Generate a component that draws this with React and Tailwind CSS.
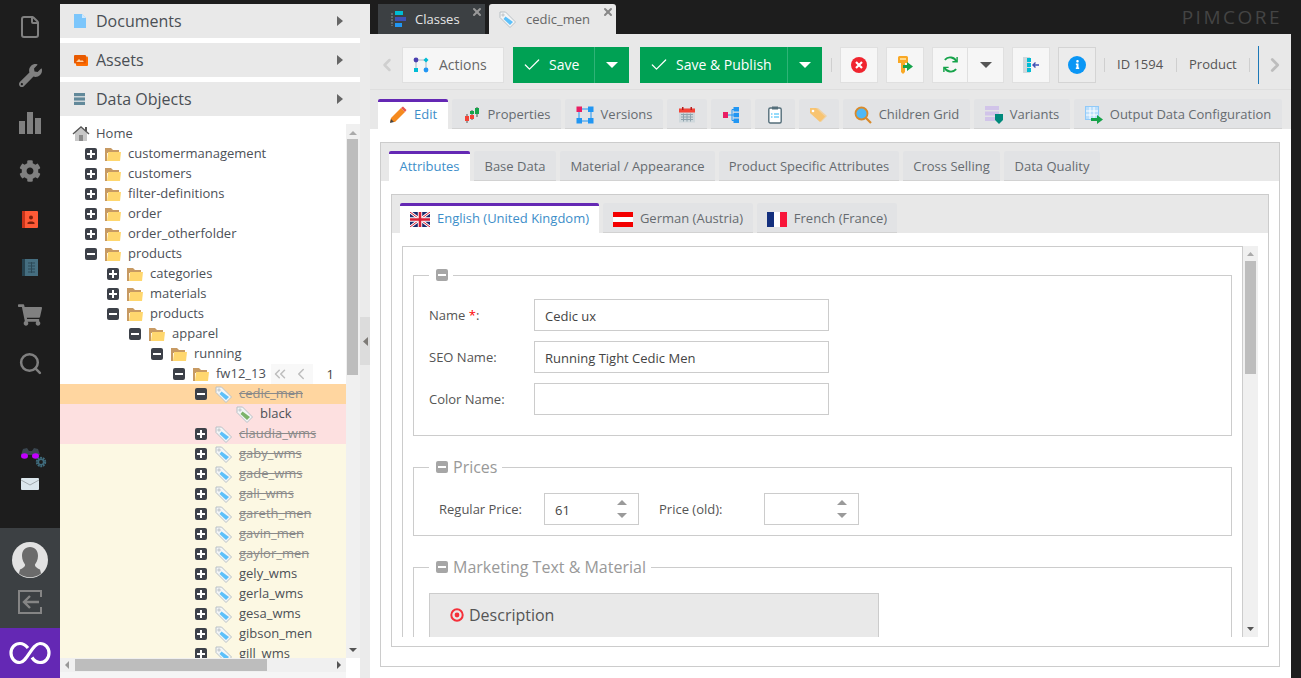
import { File, Search, X, Check, ChevronLeft, ChevronRight, ChevronsLeft } from 'lucide-react';
import { FaWrench, FaCog, FaShoppingCart, FaInfo } from 'react-icons/fa';

const Tri = ({ dir = 'down', className = '' }) => {
  const pts = { down: '0,0 10,0 5,5', up: '0,5 10,5 5,0', right: '0,0 6,5 0,10', left: '6,0 0,5 6,10' };
  const box = dir === 'left' || dir === 'right' ? '0 0 6 10' : '0 0 10 5';
  const size = dir === 'left' || dir === 'right' ? 'w-[6px] h-[10px]' : 'w-[10px] h-[5px]';
  return (
    <svg viewBox={box} preserveAspectRatio="none" className={`${className || size}`}>
      <polygon points={pts[dir]} fill="currentColor" />
    </svg>
  );
};

const ToggleBox = ({ open, gray }) => (
  <span className={`flex items-center justify-center w-[12px] h-[12px] rounded-[2px] shrink-0 ${gray ? 'bg-[#a6a6a6]' : 'bg-[#3d4149]'}`}>
    <svg viewBox="0 0 12 12" className="w-[12px] h-[12px]">
      <rect x="2" y="5" width="8" height="2" fill="#fff" />
      {!open && <rect x="5" y="2" width="2" height="8" fill="#fff" />}
    </svg>
  </span>
);

const Folder = () => (
  <svg viewBox="0 0 16 14" className="w-[16px] h-[14px] shrink-0">
    <path d="M0 1h6l2 2h6v3H2v8H0z" fill="#c79a63" />
    <path d="M3 5h13l-1 9H2z" fill="#ffd76e" />
  </svg>
);

const TagIcon = ({ color = '#5cc0fa' }) => (
  <svg viewBox="0 0 17 17" className="w-[17px] h-[17px] shrink-0">
    <path d="M1 1h5.500L16.500 11l-5.500 5.500L1 6.500z" fill="#f3f5f6" stroke="#b8c0c5" />
    <path d="M6.500 5.500l7.500 5.500-3 3-6.500-6z" fill={color} />
    <circle cx="4" cy="4" r="1.100" fill="#fff" stroke="#9fa8ad" strokeWidth="0.7" />
  </svg>
);

const HomeIcon = () => (
  <svg viewBox="0 0 18 18" className="w-[18px] h-[18px] shrink-0">
    <path d="M3 8l6-5 6 5v8H3z" fill="#c8c8c8" />
    <rect x="7" y="10" width="4" height="6" fill="#8a8a8a" />
    <path d="M1 9l8-7 8 7" fill="none" stroke="#555" strokeWidth="1.400" />
    <rect x="13" y="2" width="2" height="4" fill="#555" />
  </svg>
);

const ActionsIcon = () => (
  <svg viewBox="0 0 16 16" className="w-[16px] h-[16px]">
    <path d="M3 3h10M3 3v10M13 3v10" stroke="#9ab" strokeWidth="0.800" />
    <circle cx="3" cy="3" r="2.400" fill="#4a3fb0" />
    <path d="M13 0.500L15.500 3 13 5.500 10.500 3z" fill="#00bcd4" />
    <rect x="1" y="11" width="4" height="4" fill="#00bcd4" />
    <circle cx="13" cy="13" r="2.400" fill="#2196f3" />
  </svg>
);

const Candles = () => (
  <svg viewBox="0 0 18 18" className="w-[18px] h-[18px]">
    <path d="M4 8v9M9 4v10M14 1v10" stroke="#555" strokeWidth="1" />
    <rect x="2" y="10" width="4" height="5" fill="#f44336" />
    <rect x="7" y="5" width="4" height="3" fill="#16a34a" />
    <rect x="7" y="9" width="4" height="4" fill="#f44336" />
    <rect x="12" y="2" width="4" height="6" fill="#16a34a" />
  </svg>
);

const VersionsIcon = () => (
  <svg viewBox="0 0 18 18" className="w-[18px] h-[18px]">
    <path d="M3 3h12M3 3v12M15 3v12M3 15h12" stroke="#2196f3" strokeWidth="1" />
    <rect x="0.500" y="0.500" width="5.500" height="5.500" fill="#e91e63" />
    <rect x="12" y="0.500" width="5.500" height="5.500" fill="#2196f3" />
    <rect x="0.500" y="12" width="5.500" height="5.500" fill="#2196f3" />
    <rect x="12" y="12" width="5.500" height="5.500" fill="#2196f3" />
  </svg>
);

const CalendarIcon = () => (
  <svg viewBox="0 0 16 16" className="w-[16px] h-[16px]">
    <rect x="0" y="1.500" width="16" height="14" fill="#cfd8dc" />
    <rect x="0" y="1.500" width="16" height="4" fill="#f44336" />
    <rect x="3" y="0" width="1.500" height="3" fill="#b71c1c" />
    <rect x="11.500" y="0" width="1.500" height="3" fill="#b71c1c" />
    <path d="M2 7.500h12M2 10h12M2 12.500h12M4.500 6.500v8M8 6.500v8M11.500 6.500v8" stroke="#90a4ae" strokeWidth="1" />
  </svg>
);

const HierarchyIcon = () => (
  <svg viewBox="0 0 16 16" className="w-[16px] h-[16px]">
    <rect x="0" y="5" width="5" height="6" fill="#e91e63" />
    <path d="M5 8h4M9 2.500v11M9 2.500h2M9 8h2M9 13.500h2" stroke="#2196f3" strokeWidth="1" />
    <rect x="10.500" y="0" width="5.500" height="4.500" fill="#2196f3" />
    <rect x="10.500" y="5.800" width="5.500" height="4.500" fill="#2196f3" />
    <rect x="10.500" y="11.500" width="5.500" height="4.500" fill="#2196f3" />
  </svg>
);

const ClipboardIcon = () => (
  <svg viewBox="0 0 14 18" className="w-[14px] h-[18px]">
    <rect x="0.800" y="2" width="12.400" height="15" rx="1.500" fill="#fff" stroke="#546e7a" strokeWidth="1.400" />
    <rect x="4" y="0.500" width="6" height="3" fill="#546e7a" />
    <path d="M3 8h1.500M6 8h5M3 11h1.500M6 11h5" stroke="#29b6f6" strokeWidth="1" />
  </svg>
);

const TagsIcon = () => (
  <svg viewBox="0 0 19 16" className="w-[19px] h-[16px]">
    <path d="M3 1h5l9 8-6 6-8-8z" fill="#f5c988" opacity="0.700" />
    <path d="M0 1h6l9 8.500-5 5.500L0 6z" fill="#f8c471" />
    <circle cx="3" cy="4" r="1.300" fill="#fff" />
  </svg>
);

const MagnifierIcon = () => (
  <svg viewBox="0 0 18 18" className="w-[18px] h-[18px]">
    <circle cx="7.500" cy="7.500" r="6" fill="#4fb8f5" stroke="#d98a2b" strokeWidth="1.800" />
    <path d="M12 12l5 5" stroke="#d98a2b" strokeWidth="2.200" />
  </svg>
);

const VariantsIcon = () => (
  <svg viewBox="0 0 18 18" className="w-[18px] h-[18px]">
    <rect x="0" y="0" width="14" height="4" fill="#d1c4e9" />
    <rect x="0" y="5.500" width="14" height="4" fill="#d1c4e9" />
    <rect x="0" y="11" width="10" height="4" fill="#d1c4e9" />
    <path d="M10 8h8v6l-4 4-4-4z" fill="#00897b" />
  </svg>
);

const OutputIcon = () => (
  <svg viewBox="0 0 18 18" className="w-[18px] h-[18px]">
    <rect x="0.500" y="0.500" width="13" height="13" fill="#bbdefb" stroke="#90caf9" />
    <path d="M5 1v12M9 1v12M1 5h12M1 9h12" stroke="#fff" strokeWidth="1" />
    <path d="M6 12h6V9l6 4.500-6 4.500v-3H6z" fill="#16a34a" />
  </svg>
);

const Flag = ({ kind }) => {
  if (kind === 'uk') {
    return (
      <svg viewBox="0 0 20 15" className="w-[20px] h-[15px]">
        <rect width="20" height="15" fill="#1a2a6c" />
        <path d="M0 0l20 15M20 0L0 15" stroke="#fff" strokeWidth="2.800" />
        <path d="M0 0l20 15M20 0L0 15" stroke="#d81e34" strokeWidth="1" />
        <path d="M10 0v15M0 7.500h20" stroke="#fff" strokeWidth="4.400" />
        <path d="M10 0v15M0 7.500h20" stroke="#d81e34" strokeWidth="2.600" />
      </svg>
    );
  }
  if (kind === 'at') {
    return (
      <svg viewBox="0 0 20 15" className="w-[20px] h-[15px]">
        <rect width="20" height="15" fill="#f30000" />
        <rect y="5" width="20" height="5" fill="#fff" />
      </svg>
    );
  }
  return (
    <svg viewBox="0 0 20 15" className="w-[20px] h-[15px]">
      <rect width="7" height="15" fill="#14307e" />
      <rect x="7" width="6" height="15" fill="#fff" />
      <rect x="13" width="7" height="15" fill="#f8153a" />
    </svg>
  );
};

const treeRows = [
  { t: 'customermanagement', l: 1, k: 'f' },
  { t: 'customers', l: 1, k: 'f' },
  { t: 'filter-definitions', l: 1, k: 'f' },
  { t: 'order', l: 1, k: 'f' },
  { t: 'order_otherfolder', l: 1, k: 'f' },
  { t: 'products', l: 1, k: 'f', open: true },
  { t: 'categories', l: 2, k: 'f' },
  { t: 'materials', l: 2, k: 'f' },
  { t: 'products', l: 2, k: 'f', open: true },
  { t: 'apparel', l: 3, k: 'f', open: true },
  { t: 'running', l: 4, k: 'f', open: true },
  { t: 'fw12_13', l: 5, k: 'f', open: true, pager: true },
  { t: 'cedic_men', l: 6, k: 't', open: true, del: true, bg: 'bg-[#ffd6a0]' },
  { t: 'black', l: 7, k: 'v', bg: 'bg-[#fde0e0]' },
  { t: 'claudia_wms', l: 6, k: 't', del: true, bg: 'bg-[#fde0e0]' },
  { t: 'gaby_wms', l: 6, k: 't', del: true, bg: 'bg-[#fcf8e3]' },
  { t: 'gade_wms', l: 6, k: 't', del: true, bg: 'bg-[#fcf8e3]' },
  { t: 'gali_wms', l: 6, k: 't', del: true, bg: 'bg-[#fcf8e3]' },
  { t: 'gareth_men', l: 6, k: 't', del: true, bg: 'bg-[#fcf8e3]' },
  { t: 'gavin_men', l: 6, k: 't', del: true, bg: 'bg-[#fcf8e3]' },
  { t: 'gaylor_men', l: 6, k: 't', del: true, bg: 'bg-[#fcf8e3]' },
  { t: 'gely_wms', l: 6, k: 't', bg: 'bg-[#fcf8e3]' },
  { t: 'gerla_wms', l: 6, k: 't', bg: 'bg-[#fcf8e3]' },
  { t: 'gesa_wms', l: 6, k: 't', bg: 'bg-[#fcf8e3]' },
  { t: 'gibson_men', l: 6, k: 't', bg: 'bg-[#fcf8e3]' },
  { t: 'gill_wms', l: 6, k: 't', bg: 'bg-[#fcf8e3]' },
];

const indent = {
  1: 'pl-[25px]',
  2: 'pl-[47px]',
  3: 'pl-[69px]',
  4: 'pl-[91px]',
  5: 'pl-[113px]',
  6: 'pl-[135px]',
  7: 'pl-[176px]',
};

const TreeRow = ({ row }) => (
  <div className={`flex items-center h-[20px] shrink-0 text-[13px] ${indent[row.l]} ${row.bg || 'bg-white'}`}>
    {row.k !== 'v' && <ToggleBox open={row.open} />}
    {row.k === 'f' && <span className="ml-[8px]"><Folder /></span>}
    {row.k === 't' && <span className="ml-[8px]"><TagIcon /></span>}
    {row.k === 'v' && <TagIcon color="#7cb36a" />}
    <span className={`ml-[7px] whitespace-nowrap ${row.del ? 'line-through text-[#8a8a8a]' : 'text-[#4c5057]'}`}>{row.t}</span>
    {row.pager && (
      <div className="ml-auto flex items-center h-[20px] bg-[#f8f8f8]">
        <ChevronsLeft size={18} strokeWidth={2} className="text-[#bdbdbd]" />
        <ChevronLeft size={18} strokeWidth={2} className="text-[#bdbdbd] ml-[3px] mr-[3px]" />
        <span className="w-[33px] h-[20px] pr-[12px] text-right leading-[20px] text-[#444] bg-white">1</span>
      </div>
    )}
  </div>
);

const AccHeader = ({ icon, label }) => (
  <div className="flex items-center h-[34px] bg-[#e9e9e9] pl-[14px] pr-[17px] text-[16px] text-[#4a4f55]">
    <span className="w-[22px] flex justify-start">{icon}</span>
    <span className="flex-1">{label}</span>
    <Tri dir="right" className="w-[6px] h-[10px] text-[#666]" />
  </div>
);

const RailIcon = ({ children }) => (
  <div className="h-[48px] flex items-center justify-center shrink-0 text-[#808080]">{children}</div>
);

const ToolBtn = ({ children, w = 'w-[38px]', className = 'border border-[#e0e0e0] bg-[#f6f6f6]' }) => (
  <div className={`flex items-center justify-center h-[36px] ${w} ${className}`}>{children}</div>
);

const GreenBtn = ({ label, w, mr }) => (
  <div className={`flex items-center h-[36px] bg-[#00a154] text-white text-[14px] ${w} ${mr}`}>
    <div className="flex-1 flex items-center pl-[9px] gap-[7px]">
      <Check size={20} strokeWidth={1.500} />
      <span>{label}</span>
    </div>
    <div className="w-[35px] h-full flex items-center justify-center border-l border-[#2fb377]">
      <Tri dir="down" className="w-[12px] h-[6px] text-white" />
    </div>
  </div>
);

const TabBtn = ({ active, w, children }) => (
  <div className={`flex items-center justify-center h-[30px] gap-[7px] text-[13px] whitespace-nowrap rounded-t-[2px] ${w} ${active ? 'bg-white border-t-[3px] pb-[1px] border-[#6428b4] text-[#3d8ec9]' : 'bg-[#e2e3e5] border-b pt-[3px] border-[#d2d2d2] text-[#666b70]'}`}>
    {children}
  </div>
);

const Sep = ({ className = '' }) => <div className={`w-px h-[14px] shrink-0 bg-[#cfcfcf] ${className}`} />;

const Legend = ({ children }) => (
  <legend className="px-[7px] pr-[5px] h-[20px] flex items-center gap-[5px] text-[16px] text-[#999]">
    <ToggleBox open gray />
    {children}
  </legend>
);

const TextField = ({ label, req, value }) => (
  <div className="flex items-center h-[32px] text-[13px] text-[#555]">
    <span className="w-[105px] pt-[2px]">
      {label}
      {req && <span> <span className="text-[#f00]">*</span>:</span>}
    </span>
    <div className="w-[295px] h-[32px] border border-[#ccc] pl-[10px] leading-[32px] text-[#444]">{value}</div>
  </div>
);

const NumberField = ({ value }) => (
  <div className="relative w-[95px] h-[32px] border border-[#ccc] pl-[10px] leading-[32px] text-[#444]">
    {value}
    <div className="absolute right-[11px] top-[6px] flex flex-col gap-[8px] text-[#9a9a9a]">
      <Tri dir="up" />
      <Tri dir="down" />
    </div>
  </div>
);

export default function App() {
  return (
    <div className="flex w-[1301px] h-[678px] overflow-hidden bg-[#1d1d1d] font-['Open_Sans',sans-serif]">
      {/* Left rail */}
      <aside className="flex flex-col w-[60px] shrink-0 pt-[3px]">
        <RailIcon><File size={24} strokeWidth={2} /></RailIcon>
        <RailIcon><FaWrench size={23} /></RailIcon>
        <RailIcon>
          <svg viewBox="0 0 22 22" className="w-[22px] h-[22px]">
            <rect x="0" y="9" width="6" height="13" fill="currentColor" />
            <rect x="8" y="0" width="6" height="22" fill="currentColor" />
            <rect x="16" y="6" width="6" height="16" fill="currentColor" />
          </svg>
        </RailIcon>
        <RailIcon><FaCog size={22} /></RailIcon>
        <RailIcon>
          <svg viewBox="0 0 16 17" className="w-[16px] h-[17px]">
            <rect width="16" height="17" rx="1" fill="#ff5a36" />
            <rect width="3" height="17" fill="#c9341a" />
            <circle cx="9" cy="6.500" r="2" fill="#7a1f0c" />
            <path d="M5.500 12c0-2 7-2 7 0v1h-7z" fill="#7a1f0c" />
          </svg>
        </RailIcon>
        <RailIcon>
          <svg viewBox="0 0 16 17" className="w-[16px] h-[17px]">
            <rect width="16" height="17" fill="#26424f" />
            <rect x="3" width="13" height="17" fill="#456e80" />
            <path d="M6 4h7M6 7h7M6 10h7M6 13h7M9.500 3v11" stroke="#2c4957" strokeWidth="1" />
          </svg>
        </RailIcon>
        <RailIcon><FaShoppingCart size={24} /></RailIcon>
        <RailIcon><Search size={25} strokeWidth={2.400} /></RailIcon>
        <div className="flex justify-center mt-[60px] pl-[7px] h-[22px] shrink-0">
          <svg viewBox="0 0 27 21" className="w-[27px] h-[21px]">
            <path d="M1 8l2-6 4-1 2 3h3l2-3 4 1 2 6z" fill="#3a4650" />
            <ellipse cx="4.500" cy="9" rx="3.500" ry="2.800" fill="#c000ff" />
            <ellipse cx="15.500" cy="9" rx="3.500" ry="2.800" fill="#c000ff" />
            <circle cx="21" cy="15" r="4" fill="none" stroke="#3f6b7c" strokeWidth="2.400" strokeDasharray="1.800 0.700" />
            <circle cx="21" cy="15" r="2.600" fill="none" stroke="#3f6b7c" strokeWidth="1.400" />
          </svg>
        </div>
        <div className="flex justify-center mt-[9px] shrink-0">
          <svg viewBox="0 0 18 12" className="w-[18px] h-[12px]">
            <rect width="18" height="12" rx="1" fill="#dbe6ec" />
            <path d="M0 2l9 5 9-5" fill="none" stroke="#1d1d1d" strokeWidth="1" opacity="0.300" />
          </svg>
        </div>
        <div className="mt-auto h-[100px] bg-[#3c4043] flex flex-col items-center pt-[14px]">
          <svg viewBox="0 0 36 36" className="w-[36px] h-[36px] shrink-0">
            <circle cx="18" cy="18" r="18" fill="#e2e2e2" />
            <path d="M18 5c-5 0-8 3.500-8 9 0 4 2 7 3 8.500 .5 2-1.500 3.500-5 5l-1 4a18 18 0 0 0 22 0l-1-4c-3.500-1.500-5.500-3-5-5 1-1.500 3-4.500 3-8.500 0-5.500-3-9-8-9z" fill="#6b6b6b" />
          </svg>
          <svg viewBox="0 0 24 24" fill="none" stroke="#858585" strokeWidth="2" className="w-[24px] h-[24px] mt-[12px]">
            <path d="M23 7V1H1v22h22v-6" />
            <path d="M21 12H7M12 6l-6 6 6 6" strokeWidth="2.400" />
          </svg>
        </div>
        <div className="h-[50px] shrink-0 bg-[#6428b4] flex items-center justify-center">
          <svg viewBox="0 0 42 24" fill="none" stroke="#fff" strokeWidth="3.200" className="w-[42px] h-[24px]">
            <path d="M19 7C16 3.500 13.500 2.500 11 2.500 6 2.500 2 6.500 2 12s4 9.500 9 9.500c7 0 12-19 20-19 5 0 9 4 9 9.500s-4 9.500-9 9.500c-3 0-6-2-8-5" />
          </svg>
        </div>
      </aside>

      {/* Tree panel */}
      <section className="flex flex-col w-[300px] shrink-0 mt-[4px] bg-white">
        <AccHeader
          label="Documents"
          icon={
            <svg viewBox="0 0 12 14" className="w-[12px] h-[14px]">
              <path d="M0 0h8l4 4v10H0z" fill="#7cc6fb" />
              <path d="M8 0l4 4H8z" fill="#cfe9fd" />
            </svg>
          }
        />
        <div className="mt-[5px]">
          <AccHeader
            label="Assets"
            icon={
              <svg viewBox="0 0 14 11" className="w-[14px] h-[11px]">
                <rect x="2" y="1.500" width="12" height="9.500" rx="1" fill="#ff6d00" />
                <rect width="12" height="8.500" rx="1" fill="#e85a00" />
                <path d="M2 7l3-3 2 2 1-1 2 2z" fill="#ffd0a0" />
              </svg>
            }
          />
        </div>
        <div className="mt-[5px]">
          <AccHeader
            label="Data Objects"
            icon={
              <svg viewBox="0 0 11 12" className="w-[11px] h-[12px]">
                <rect width="11" height="3.200" fill="#62899a" />
                <rect y="4.400" width="11" height="3.200" fill="#62899a" />
                <rect y="8.800" width="11" height="3.200" fill="#62899a" />
              </svg>
            }
          />
        </div>
        <div className="flex flex-1 min-h-0">
          <div className="flex flex-col w-[286px] shrink-0">
            <div className="flex-1 min-h-0 overflow-hidden pt-[8px] flex flex-col">
              <div className="flex items-center h-[20px] shrink-0 pl-[12px] text-[13px] text-[#4c5057]">
                <HomeIcon />
                <span className="ml-[6px]">Home</span>
              </div>
              {treeRows.map((row, i) => <TreeRow key={i} row={row} />)}
            </div>
            {/* horizontal scrollbar */}
            <div className="flex items-center h-[14px] shrink-0 bg-[#f0f0f0] px-[5px] text-[#999]">
              <Tri dir="left" className="w-[4px] h-[8px]" />
              <div className="ml-[6px] w-[192px] h-[12px] bg-[#bdbdbd]" />
              <Tri dir="right" className="ml-auto w-[4px] h-[8px] text-[#555]" />
            </div>
            <div className="h-[6px] shrink-0 bg-[#f5f5f5]" />
          </div>
          {/* vertical scrollbar */}
          <div className="flex flex-col items-start pl-[1px] w-[14px] mt-[8px] mb-[20px] bg-[#f0f0f0] text-[#aaa]">
            <Tri dir="up" className="ml-[2px] w-[8px] h-[4px] mt-[7px]" />
            <div className="mt-[4px] w-[11px] h-[236px] bg-[#bdbdbd]" />
            <Tri dir="down" className="ml-[2px] w-[8px] h-[4px] mt-auto mb-[6px] text-[#555]" />
          </div>
        </div>
      </section>

      {/* Splitter */}
      <div className="flex items-center w-[10px] shrink-0 bg-[#ebebeb] mt-[4px]">
        <div className="flex items-center justify-center w-[10px] h-[48px] bg-[#dcdcdc] text-[#7d7a76]">
          <Tri dir="left" className="w-[5px] h-[9px]" />
        </div>
      </div>

      {/* Main */}
      <main className="flex flex-col w-[921px] shrink-0">
        <div className="flex items-end h-[34px] shrink-0 pl-[8px] text-[13px]">
          <div className="relative flex items-center w-[107px] h-[30px] bg-[#3c4043] pl-[13px] pt-[1px] gap-[9px] text-[#e6e6e6]">
            <svg viewBox="0 0 15 17" className="w-[15px] h-[17px]">
              <path d="M1 2v13" stroke="#8a9297" strokeWidth="1" strokeDasharray="2 1" />
              <rect x="4" y="0" width="8" height="4" fill="#00bcd4" />
              <rect x="4" y="6" width="11" height="4" fill="#3f51b5" />
              <rect x="4" y="12" width="7" height="4" fill="#2196f3" />
            </svg>
            Classes
            <X size={12} strokeWidth={4} className="absolute top-[2px] right-[2px] text-[#999]" />
          </div>
          <div className="relative flex items-center w-[127px] h-[30px] ml-[4px] bg-[#e8e8e8] rounded-t-[3px] pl-[10px] pt-[1px] gap-[10px] text-[#666]">
            <TagIcon />
            cedic_men
            <X size={12} strokeWidth={4} className="absolute top-[2px] right-[2px] text-[#888]" />
          </div>
          <div className="ml-auto mb-[6px] pr-[9px] text-[19px] leading-[22px] tracking-[2.500px] font-medium text-[#444]">PIMCORE</div>
        </div>

        <div className="flex flex-col flex-1 min-h-0 bg-white">
          {/* Toolbar */}
          <div className="flex items-center h-[56px] shrink-0 bg-[#e8e8e8] border-b border-[#dedede] pl-[7px] pt-[6px]">
            <ChevronLeft size={20} strokeWidth={3} className="text-[#cfcfcf] shrink-0" />
            <div className="flex items-center w-[102px] h-[36px] ml-[5px] mr-[9px] bg-[#f6f6f6] border border-[#e0e0e0] pl-[10px] gap-[10px] text-[14px] text-[#666]">
              <ActionsIcon />
              Actions
            </div>
            <GreenBtn label="Save" w="w-[116px]" mr="mr-[11px]" />
            <GreenBtn label="Save & Publish" w="w-[182px]" />
            <Sep className="ml-[9px] mr-[8px]" />
            <ToolBtn>
              <svg viewBox="0 0 16 16" className="w-[16px] h-[16px]">
                <circle cx="8" cy="8" r="8" fill="#f0252f" />
                <path d="M5 5l6 6M11 5l-6 6" stroke="#fff" strokeWidth="2.200" />
              </svg>
            </ToolBtn>
            <div className="w-[8px] shrink-0" />
            <ToolBtn>
              <svg viewBox="0 0 16 18" className="w-[16px] h-[18px]">
                <path d="M1 1.500Q1 0 2.500 0h7Q11 0 11 1.500V7H8v9l-2 2-2-2V7H1z" fill="#f9a825" />
                <rect x="3" y="2" width="6" height="2" fill="#ffd98a" />
                <path d="M6 9h4V6l6 4.500-6 4.500v-3H6z" fill="#16a34a" />
              </svg>
            </ToolBtn>
            <div className="w-[8px] shrink-0" />
            <ToolBtn w="w-[36px]">
              <svg viewBox="0 0 18 18" fill="none" stroke="#16a34a" strokeWidth="2" className="w-[17px] h-[17px]">
                <path d="M15.500 6A7.500 7.500 0 0 0 3 4" />
                <path d="M2.500 12A7.500 7.500 0 0 0 15 14" />
                <path d="M16 1v5h-5M2 17v-5h5" strokeWidth="1.500" />
              </svg>
            </ToolBtn>
            <ToolBtn w="w-[36px]" className="border border-l-0 border-[#e0e0e0] bg-[#f6f6f6]">
              <Tri className="w-[12px] h-[6px] text-[#555]" />
            </ToolBtn>
            <div className="w-[8px] shrink-0" />
            <ToolBtn>
              <svg viewBox="0 0 18 16" className="w-[18px] h-[16px]">
                <rect x="1" y="0" width="7" height="16" fill="#cfd8dc" />
                <rect x="5" y="1" width="4" height="4" fill="#00bcd4" />
                <rect x="5" y="6" width="4" height="4" fill="#00bcd4" />
                <rect x="5" y="11" width="4" height="4" fill="#00bcd4" />
                <path d="M17 8h-6M13.500 5.500L11 8l2.500 2.500" fill="none" stroke="#3f51b5" strokeWidth="1.400" />
              </svg>
            </ToolBtn>
            <div className="w-[8px] shrink-0" />
            <ToolBtn className="border border-[#d4d4d4] bg-[#ececec]">
              <span className="flex items-center justify-center w-[18px] h-[18px] rounded-full bg-[#0a96f5] text-white">
                <FaInfo size={9} />
              </span>
            </ToolBtn>
            <Sep className="ml-[8px]" />
            <span className="ml-[12px] w-[46px] whitespace-nowrap text-[13px] text-[#555]">ID 1594</span>
            <Sep className="ml-[13px]" />
            <span className="ml-[12px] w-[48px] whitespace-nowrap text-[13px] text-[#555]">Product</span>
            <Sep className="ml-[12px]" />
            <div className="ml-[8px] w-px h-[38px] shrink-0 bg-[#1b78b8]" />
            <ChevronRight size={22} strokeWidth={3} className="ml-[5px] shrink-0 text-[#bdbdbd]" />
          </div>

          {/* Edit tabs */}
          <div className="flex gap-[4px] shrink-0 pl-[8px] pt-[9px] h-[39px] bg-[#e8e8e8]">
            <TabBtn active w="w-[70px]">
              <svg viewBox="0 0 18 18" className="w-[18px] h-[18px]">
                <path d="M2 12L12 2l4 4L6 16H1z" fill="#f58a1f" />
                <path d="M12 2l2-1.500L17.500 4 16 6z" fill="#e8574d" />
                <path d="M1 17l1-4 3 3z" fill="#444" />
              </svg>
              Edit
            </TabBtn>
            <TabBtn w="w-[109px]"><Candles />Properties</TabBtn>
            <TabBtn w="w-[98px]"><VersionsIcon />Versions</TabBtn>
            <TabBtn w="w-[40px]"><CalendarIcon /></TabBtn>
            <TabBtn w="w-[40px]"><HierarchyIcon /></TabBtn>
            <TabBtn w="w-[40px]"><ClipboardIcon /></TabBtn>
            <TabBtn w="w-[40px]"><TagsIcon /></TabBtn>
            <TabBtn w="w-[127px]"><MagnifierIcon />Children Grid</TabBtn>
            <TabBtn w="w-[96px]"><VariantsIcon />Variants</TabBtn>
            <TabBtn w="w-[208px]"><OutputIcon />Output Data Configuration</TabBtn>
          </div>

          {/* Editor */}
          <div className="flex-1 min-h-0 px-[10px] pt-[13px] pb-[11px]">
            <div className="flex flex-col h-full w-[900px] border border-[#ccc]">
              <div className="flex gap-[4px] h-[38px] shrink-0 pl-[8px] pt-[8px] bg-[#e8e8e8]">
                <TabBtn active w="w-[81px]">Attributes</TabBtn>
                <TabBtn w="w-[82px]">Base Data</TabBtn>
                <TabBtn w="w-[155px]">Material / Appearance</TabBtn>
                <TabBtn w="w-[180px]">Product Specific Attributes</TabBtn>
                <TabBtn w="w-[97px]">Cross Selling</TabBtn>
                <TabBtn w="w-[96px]">Data Quality</TabBtn>
              </div>
              <div className="flex-1 min-h-0 px-[10px] pt-[13px] pb-[19px]">
                <div className="flex flex-col h-full border border-[#ccc]">
                  <div className="flex gap-[4px] h-[38px] shrink-0 pl-[8px] pt-[8px] bg-[#e8e8e8]">
                    <TabBtn active w="w-[199px]"><Flag kind="uk" />English (United Kingdom)</TabBtn>
                    <TabBtn w="w-[150px]"><Flag kind="at" />German (Austria)</TabBtn>
                    <TabBtn w="w-[140px]"><Flag kind="fr" />French (France)</TabBtn>
                  </div>
                  <div className="flex-1 min-h-0 pl-[10px] pr-[10px] pt-[13px] pb-[9px]">
                    <div className="flex h-full">
                      <div className="flex-1 min-w-0 overflow-hidden border-t border-l border-r border-[#ccc] px-[10px] pt-[18px]">
                        <fieldset className="border border-[#ccc] px-[15px] pt-[14px] pb-[20px]">
                          <Legend />
                          <div className="flex flex-col gap-[10px]">
                            <TextField label="Name" req value="Cedic ux" />
                            <TextField label="SEO Name:" value="Running Tight Cedic Men" />
                            <TextField label="Color Name:" value="" />
                          </div>
                        </fieldset>
                        <fieldset className="mt-[21px] border border-[#ccc] px-[15px] pt-[16px] pb-[10px]">
                          <Legend>Prices</Legend>
                          <div className="flex items-center pl-[10px] text-[13px] text-[#555]">
                            <span className="w-[105px] pt-[2px]">Regular Price:</span>
                            <NumberField value="61" />
                            <span className="w-[105px] pt-[2px] ml-[20px]">Price (old):</span>
                            <NumberField value="" />
                          </div>
                        </fieldset>
                        <fieldset className="mt-[21px] border border-[#ccc] px-[15px] pt-[16px]">
                          <Legend>Marketing Text &amp; Material</Legend>
                          <div className="flex items-center gap-[5px] w-[450px] h-[80px] border border-[#ccc] bg-[#e9e9e9] pl-[20px] pb-[36px] text-[16px] text-[#555]">
                            <svg viewBox="0 0 14 14" className="w-[14px] h-[14px]">
                              <circle cx="7" cy="7" r="5.700" fill="none" stroke="#f5303a" strokeWidth="2" />
                              <circle cx="7" cy="7" r="2.400" fill="#f5303a" />
                            </svg>
                            Description
                          </div>
                        </fieldset>
                      </div>
                      {/* form scrollbar */}
                      <div className="flex flex-col items-center w-[15px] shrink-0 bg-[#f0f0f0] text-[#aaa]">
                        <Tri dir="up" className="w-[7px] h-[4px] mt-[6px]" />
                        <div className="mt-[5px] w-[11px] h-[113px] bg-[#bdbdbd]" />
                        <Tri dir="down" className="w-[7px] h-[4px] mt-auto mb-[6px] text-[#555]" />
                      </div>
                    </div>
                  </div>
                </div>
              </div>
            </div>
          </div>
        </div>
      </main>

      <div className="flex-1 bg-[#1d1d1d]" />
    </div>
  );
}
